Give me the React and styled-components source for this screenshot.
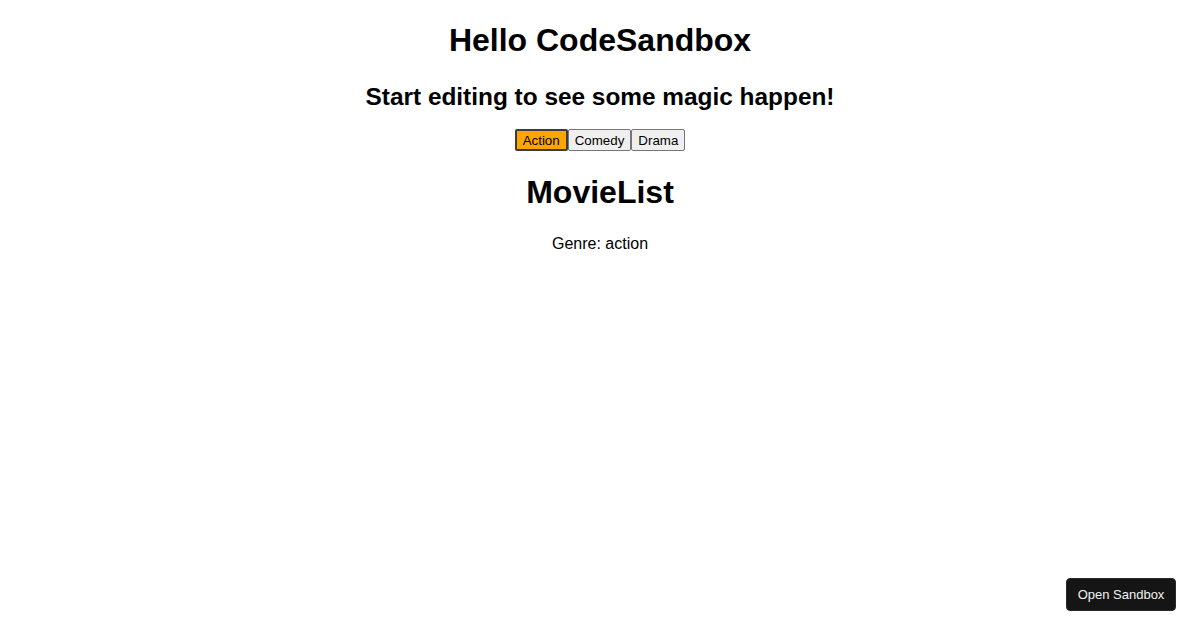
import React, { useState } from 'react';
import styled, { createGlobalStyle } from 'styled-components';

const GlobalStyle = createGlobalStyle`
  body {
    margin: 8px;
    font-family: "Liberation Sans", Arial, sans-serif;
    background: #fff;
    color: #000;
  }
`;

const Page = styled.div`
  text-align: center;
`;

const Title = styled.h1`
  font-size: 32px;
  font-weight: bold;
  margin: ${({ first }) => (first ? '14px 0 21px' : '23px 0 22px')};
`;

const Subtitle = styled.h2`
  font-size: 24.4px;
  font-weight: bold;
  margin: 24px 0 18px;
`;

const Tabs = styled.div`
  display: flex;
  justify-content: center;
  gap: 0;
`;

const Tab = styled.button`
  font-family: "Liberation Sans", Arial, sans-serif;
  font-size: 13.33px;
  height: 22px;
  padding: 1px 6px;
  border-radius: 2px;
  color: #000;
  background: ${({ active }) => (active ? 'orange' : '#efefef')};
  border: ${({ active }) => (active ? '2px solid #3b3b3b' : '1px solid #767676')};
  cursor: pointer;
`;

const Genre = styled.p`
  font-size: 16px;
  margin: 0;
  padding-top: 2px;
`;

const OpenButton = styled.a`
  position: fixed;
  right: 24px;
  bottom: 19px;
  width: 110px;
  height: 33px;
  display: flex;
  align-items: center;
  justify-content: center;
  background: #151515;
  color: #f2f2f2;
  font-size: 13px;
  border-radius: 4px;
  border: 1px solid #2a2a2a;
  box-sizing: border-box;
  text-decoration: none;
`;

const genres = ['Action', 'Comedy', 'Drama'];

export default function App() {
  const [genre, setGenre] = useState('action');

  return (
    <Page>
      <GlobalStyle />
      <Title first>Hello CodeSandbox</Title>
      <Subtitle>Start editing to see some magic happen!</Subtitle>
      <Tabs>
        {genres.map(g => (
          <Tab
            key={g}
            active={genre === g.toLowerCase()}
            onClick={() => setGenre(g.toLowerCase())}
          >
            {g}
          </Tab>
        ))}
      </Tabs>
      <div>
        <Title>MovieList</Title>
        <Genre>Genre: {genre}</Genre>
      </div>
      <OpenButton href="#">Open Sandbox</OpenButton>
    </Page>
  );
}
